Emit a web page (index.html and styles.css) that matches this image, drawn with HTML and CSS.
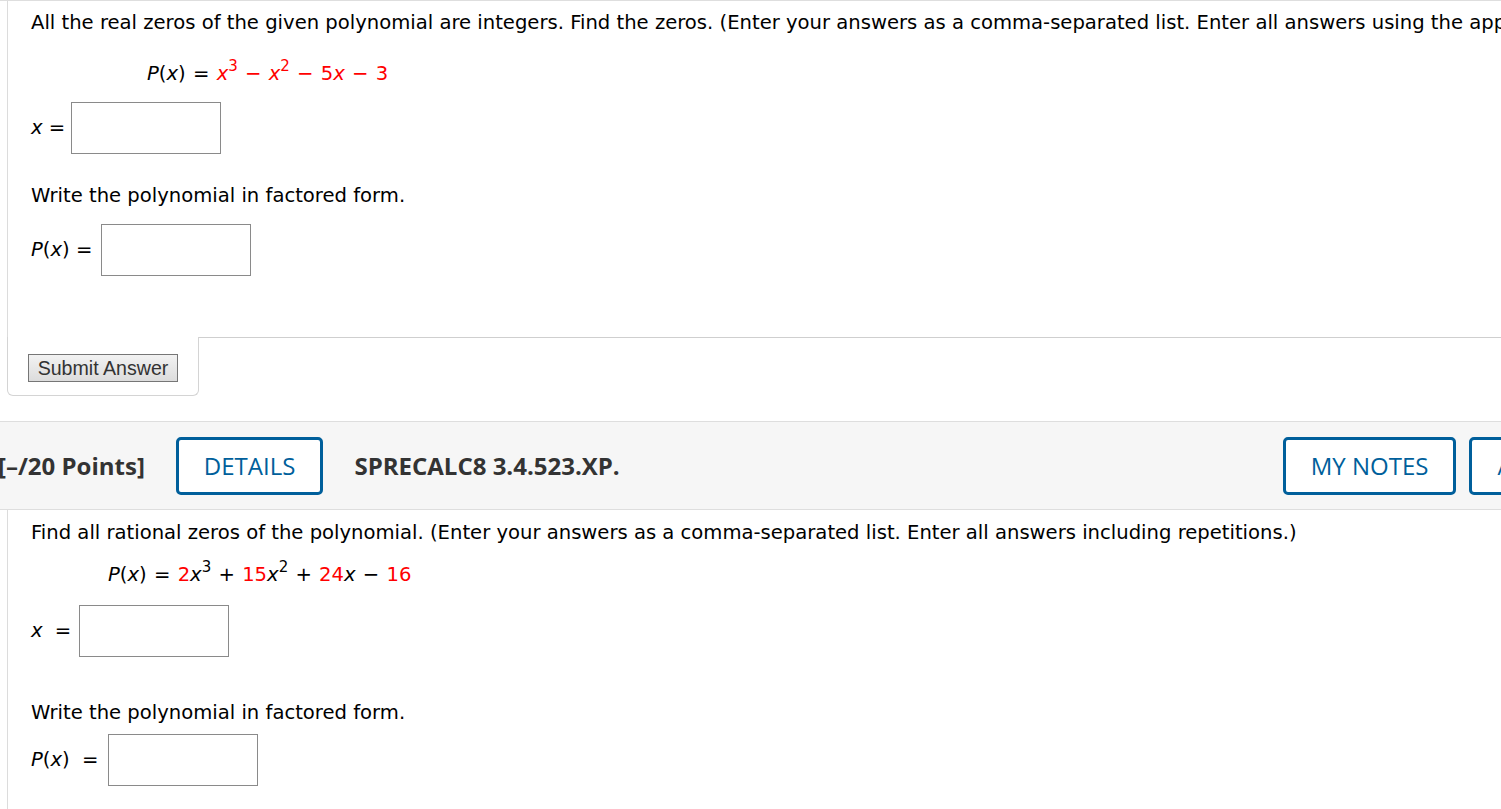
FILE: index.html
```html
<!DOCTYPE html>
<html>
<head>
<meta charset="utf-8">
<link rel="stylesheet" href="styles.css">
</head>
<body>
<div class="page">
  <div class="toprule"></div>
  <section class="q q1">
    <div class="qbody">
      <p class="prompt p1">All the real zeros of the given polynomial are integers. Find the zeros. (Enter your answers as a comma-separated list. Enter all answers using the appropriate multiplicities.)</p>
      <p class="formula f1"><i>P</i>(<i>x</i>) = <span class="red"><i>x</i><sup>3</sup> − <i>x</i><sup>2</sup> − 5<i>x</i> − 3</span></p>
      <div class="answer a1"><span class="lbl"><i>x</i> =</span><span class="box"></span></div>
      <p class="prompt p2">Write the polynomial in factored form.</p>
      <div class="answer a2"><span class="lbl"><i>P</i>(<i>x</i>) =</span><span class="box"></span></div>
    </div>
    <div class="submitrow">
      <div class="tab"><button class="submit">Submit Answer</button></div>
      <div class="filler"></div>
    </div>
  </section>

  <header class="qhead">
    <span class="points">[–/20 Points]</span>
    <span class="btn">DETAILS</span>
    <span class="code">SPRECALC8 3.4.523.XP.</span>
    <span class="spacer"></span>
    <span class="btn">MY NOTES</span>
    <span class="btn last">ASK YOUR TEACHER</span>
  </header>

  <section class="q q2">
    <div class="qbody">
      <p class="prompt p3">Find all rational zeros of the polynomial. (Enter your answers as a comma-separated list. Enter all answers including repetitions.)</p>
      <p class="formula f2"><i>P</i>(<i>x</i>) = <span class="red">2</span><i>x</i><sup>3</sup> + <span class="red">15</span><i>x</i><sup>2</sup> + <span class="red">24</span><i>x</i> − <span class="red">16</span></p>
      <div class="answer a3"><span class="lbl wide"><i>x</i> =</span><span class="box"></span></div>
      <p class="prompt p4">Write the polynomial in factored form.</p>
      <div class="answer a4"><span class="lbl wide"><i>P</i>(<i>x</i>) =</span><span class="box"></span></div>
    </div>
  </section>
</div>
</body>
</html>
```

FILE: styles.css
```css
html, body {
  margin: 0;
  padding: 0;
  background: #fff;
}
body {
  width: 1501px;
  height: 809px;
  overflow: hidden;
  font-family: "DejaVu Sans", Verdana, sans-serif;
  font-size: 19.6px;
  color: #000;
}
.page {
  width: 1501px;
}
.toprule {
  height: 1px;
  background: #dedede;
}
.q {
  margin-left: 7px;
}
.qbody {
  border-left: 1px solid #dcdcdc;
  padding-left: 23px;
}
.q1 .qbody {
  padding-top: 10px;
  padding-bottom: 61px;
}
.prompt, .formula {
  margin: 0;
  line-height: 24px;
  white-space: nowrap;
}
.formula {
  word-spacing: 1px;
}
.red {
  color: #ff0000;
}
sup {
  font-size: 15px;
  line-height: 0;
  vertical-align: 9px;
}
.f1 {
  margin-top: 27px;
  padding-left: 116px;
}
.answer {
  display: flex;
  align-items: center;
}
.lbl {
  margin-right: 6px;
  line-height: 24px;
}
.a2 .lbl {
  margin-right: 9px;
}
.lbl.wide {
  word-spacing: 6px;
  margin-right: 8px;
}
.a4 .lbl.wide {
  margin-right: 10px;
}
.box {
  display: block;
  width: 148px;
  height: 50px;
  border: 1px solid #8a8a8a;
  background: #fff;
}
.a1 { margin-top: 16px; }
.p2 { margin-top: 30px; }
.a2 { margin-top: 16px; }

.submitrow {
  display: flex;
}
.tab {
  width: 170px;
  padding: 17px 0 13px 20px;
  border-left: 1px solid #d4d4d4;
  border-right: 1px solid #d4d4d4;
  border-bottom: 1px solid #d4d4d4;
  border-radius: 0 0 6px 6px;
}
.filler {
  flex: 1;
  border-top: 1px solid #cfcfcf;
}
.submit {
  display: block;
  width: 150px;
  height: 28px;
  margin: 0;
  padding: 0;
  border: 1px solid #767676;
  background: linear-gradient(#f2f2f2, #dcdcdc);
  font-family: "Liberation Sans", Arial, sans-serif;
  font-size: 19.6px;
  color: #333;
}

.qhead {
  margin-top: 25px;
  height: 87px;
  border-top: 1px solid #dedede;
  border-bottom: 1px solid #dedede;
  background: #f6f6f6;
  display: flex;
  align-items: center;
  font-family: "Open Sans", sans-serif;
  font-size: 24px;
  color: #333;
  white-space: nowrap;
  overflow: hidden;
}
.points {
  font-weight: 700;
  margin-left: -2px;
  margin-right: 31px;
}
.code {
  font-weight: 700;
  margin-left: 31px;
}
.spacer {
  flex: 1;
}
.btn {
  display: flex;
  align-items: center;
  justify-content: center;
  box-sizing: border-box;
  height: 58px;
  padding: 0 25px;
  border: 3px solid #005f9b;
  border-radius: 5px;
  color: #005f9b;
  background: #fff;
  flex-shrink: 0;
}
.btn.last {
  margin-left: 13px;
  margin-right: -247px;
}

.q2 .qbody {
  padding-top: 11px;
  padding-bottom: 40px;
}
.f2 {
  margin-top: 18px;
  padding-left: 77px;
}
.a3 { margin-top: 18px; }
.p4 { margin-top: 44px; }
.a4 { margin-top: 9px; }
```
